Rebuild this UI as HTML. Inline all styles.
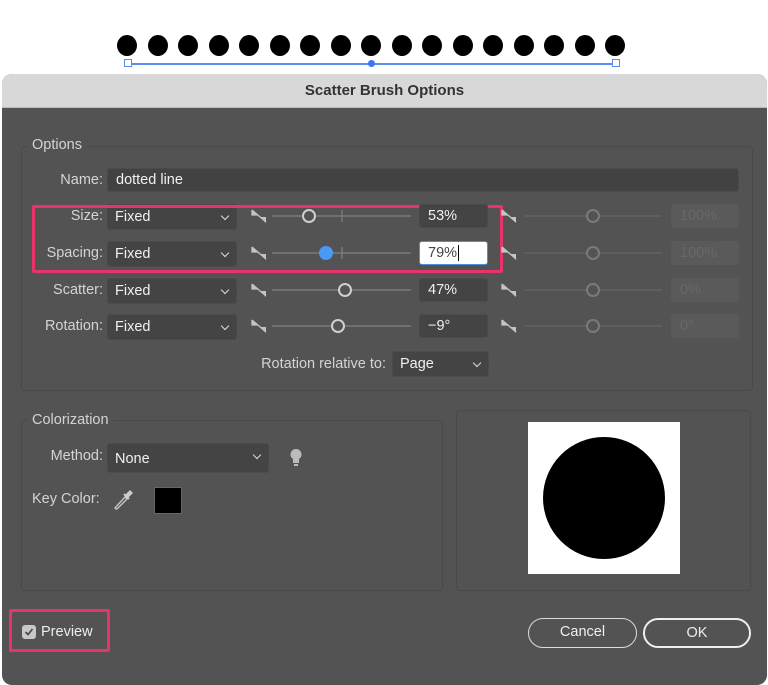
<!DOCTYPE html>
<html><head><meta charset="utf-8"><style>
*{margin:0;padding:0;box-sizing:border-box}
body{width:768px;height:685px;background:#fff;position:relative;overflow:hidden;font-family:"Liberation Sans",sans-serif}
.a{position:absolute}
.dot{position:absolute;top:35px;width:20px;height:21px;border-radius:50%;background:#000}
.dlg{position:absolute;left:2px;top:74px;width:765px;height:611px;background:#535353;border-radius:10px;overflow:hidden}
.hdr{position:absolute;left:0;top:0;width:100%;height:34px;background:#d8d8d8;border-bottom:1px solid #bbb;text-align:center;font-weight:bold;font-size:15px;color:#333;line-height:34px}
.grp{position:absolute;border:1px solid #4a4a4a;border-radius:4px}
.lbl{position:absolute;color:#d4d4d4;font-size:14.5px;text-align:right}
.sel{position:absolute;background:#444;border:1px solid #4b4b4b;border-radius:3px;color:#f0f0f0;font-size:14.5px;padding-left:7px;line-height:24px;height:26px}
.sel:after{content:"";position:absolute;right:8px;top:8px;width:5px;height:5px;border-right:1.5px solid #ddd;border-bottom:1.5px solid #ddd;transform:rotate(45deg)}
.box{position:absolute;background:#444;border:1px solid #4b4b4b;border-radius:3px;color:#f0f0f0;font-size:14.5px;padding-left:8px;line-height:22px;height:24px}
.ic{position:absolute}
</style></head><body>
<div class="dot" style="left:117px"></div><div class="dot" style="left:147.5px"></div><div class="dot" style="left:178px"></div><div class="dot" style="left:208.5px"></div><div class="dot" style="left:239px"></div><div class="dot" style="left:269.5px"></div><div class="dot" style="left:300px"></div><div class="dot" style="left:330.5px"></div><div class="dot" style="left:361px"></div><div class="dot" style="left:391.5px"></div><div class="dot" style="left:422px"></div><div class="dot" style="left:452.5px"></div><div class="dot" style="left:483px"></div><div class="dot" style="left:513.5px"></div><div class="dot" style="left:544px"></div><div class="dot" style="left:574.5px"></div><div class="dot" style="left:605px"></div>
<div class="a" style="left:128px;top:63px;width:488px;height:1.5px;background:#5a8df0"></div>
<div class="a" style="left:124px;top:59px;width:8px;height:8px;border:1.5px solid #5a8df0;background:#fff"></div>
<div class="a" style="left:612px;top:59px;width:8px;height:8px;border:1.5px solid #5a8df0;background:#fff"></div>
<div class="a" style="left:368px;top:60px;width:7px;height:7px;border-radius:50%;background:#3b78f0"></div>

<div class="dlg">
<div class="hdr">Scatter Brush Options</div>
</div>
<div class="grp" style="left:21px;top:146px;width:732px;height:245px"></div>
<div class="a" style="left:28px;top:137px;padding:0 4px;background:#535353;color:#d4d4d4;font-size:14.5px">Options</div>
<div class="lbl" style="left:28px;top:172px;width:75px">Name:</div>
<div class="box" style="left:107px;top:168px;width:632px;background:#424242">dotted line</div>

<div class="lbl" style="left:28px;top:208px;width:75px">Size:</div>
<div class="lbl" style="left:28px;top:245px;width:75px">Spacing:</div>
<div class="lbl" style="left:28px;top:282px;width:75px">Scatter:</div>
<div class="lbl" style="left:28px;top:318px;width:75px">Rotation:</div>
<div class="sel" style="left:107px;top:204px;width:130px">Fixed</div>
<div class="sel" style="left:107px;top:241px;width:130px">Fixed</div>
<div class="sel" style="left:107px;top:278px;width:130px">Fixed</div>
<div class="sel" style="left:107px;top:314px;width:130px">Fixed</div>

<div class="lbl" style="left:236px;top:356px;width:150px">Rotation relative to:</div>
<div class="sel" style="left:392px;top:351px;width:97px">Page</div>

<div class="grp" style="left:21px;top:420px;width:422px;height:171px"></div>
<div class="a" style="left:28px;top:412px;padding:0 4px;background:#535353;color:#d4d4d4;font-size:14.5px">Colorization</div>
<div class="lbl" style="left:28px;top:448px;width:75px">Method:</div>
<div class="sel" style="left:107px;top:443px;width:162px;height:30px;line-height:30px">None</div>
<svg class="ic" style="left:289px;top:448px" width="14" height="20"><circle cx="7" cy="6.5" r="5.5" fill="#bbb"/><rect x="4" y="11" width="6" height="4" fill="#bbb"/><rect x="5" y="16" width="4" height="2" fill="#bbb"/></svg>
<div class="lbl" style="left:32px;top:491px;width:80px;text-align:left">Key Color:</div>
<svg class="ic" style="left:112px;top:488px" width="24" height="24"><path d="M4 21 L3 20 L13 9 L15 11 L5 21 Z" fill="none" stroke="#ccc" stroke-width="1.3"/><path d="M13 7 L18 2 L21 5 L16 10 Z" fill="#ccc"/><path d="M12 6 L17 11" stroke="#ccc" stroke-width="2"/></svg>
<div class="a" style="left:154px;top:487px;width:28px;height:27px;background:#000;border:1px solid #666"></div>

<div class="grp" style="left:456px;top:410px;width:295px;height:181px"></div>
<div class="a" style="left:528px;top:422px;width:152px;height:152px;background:#fff"></div>
<div class="a" style="left:543px;top:437px;width:122px;height:122px;border-radius:50%;background:#000"></div>

<div class="a" style="left:22px;top:625px;width:14px;height:14px;background:#c8c8c8;border-radius:3px"></div>
<svg class="ic" style="left:22px;top:625px" width="14" height="14"><path d="M3.5 7 L6 9.5 L10.5 4" stroke="#444" stroke-width="1.6" fill="none"/></svg>
<div class="a" style="left:41px;top:624px;color:#eee;font-size:14.5px">Preview</div>

<div class="a" style="left:528px;top:618px;width:109px;height:30px;border:1.5px solid #ddd;border-radius:15px;color:#eee;font-size:14.5px;text-align:center;line-height:27px">Cancel</div>
<div class="a" style="left:643px;top:618px;width:108px;height:30px;border:2px solid #eee;border-radius:15px;color:#eee;font-size:14.5px;text-align:center;line-height:26px">OK</div>

<div class="a" style="left:32px;top:205px;width:471px;height:68px;border:3px solid #e83468;border-radius:2px"></div>
<div class="a" style="left:9px;top:609px;width:101px;height:43px;border:3px solid #e83468;border-radius:2px"></div>

<svg class="ic" style="left:0;top:0" width="768" height="685">
<defs>
<g id="tri"><path d="M0 -6 L6 -1 L0 -1 Z" fill="#c4c4c4"/><path d="M0 -6 L14 6 M0 -6 L0 -1 L6 -1" fill="none" stroke="#c4c4c4" stroke-width="1.3"/><path d="M8 1 L14 1 L14 7 Z" fill="#c4c4c4"/></g>
</defs>
<g stroke="#7a7a7a" stroke-width="1.5">
<line x1="272" y1="216" x2="411" y2="216"/><line x1="272" y1="253" x2="411" y2="253"/><line x1="272" y1="290" x2="411" y2="290"/><line x1="272" y1="326" x2="411" y2="326"/>
<line x1="342" y1="210" x2="342" y2="222"/><line x1="342" y1="247" x2="342" y2="259"/>
</g>
<g stroke="#626262" stroke-width="1.5">
<line x1="524" y1="216" x2="662" y2="216"/><line x1="524" y1="253" x2="662" y2="253"/><line x1="524" y1="290" x2="662" y2="290"/><line x1="524" y1="326" x2="662" y2="326"/>
</g>
<use href="#tri" x="252" y="216"/><use href="#tri" x="252" y="253"/><use href="#tri" x="252" y="290"/><use href="#tri" x="252" y="326"/>
<use href="#tri" x="502" y="216"/><use href="#tri" x="502" y="253"/><use href="#tri" x="502" y="290"/><use href="#tri" x="502" y="326"/>
<g fill="#535353" stroke="#cfcfcf" stroke-width="2">
<circle cx="309" cy="216" r="6"/><circle cx="345" cy="290" r="6"/><circle cx="338" cy="326" r="6"/>
</g>
<circle cx="326" cy="253" r="7" fill="#4a9af5"/>
<g fill="#535353" stroke="#7a7a7a" stroke-width="2">
<circle cx="593" cy="216" r="6"/><circle cx="593" cy="253" r="6"/><circle cx="593" cy="290" r="6"/><circle cx="593" cy="326" r="6"/>
</g>
</svg>
<div class="box" style="left:419px;top:204px;width:69px">53%</div>
<div class="box" style="left:419px;top:241px;width:69px;background:#fff;border:1.5px solid #4a90e2;color:#444">79%<span style="border-left:1.5px solid #000;margin-left:1px"></span></div>
<div class="box" style="left:419px;top:278px;width:69px">47%</div>
<div class="box" style="left:419px;top:314px;width:69px">−9°</div>
<div class="box" style="left:671px;top:204px;width:68px;background:#5a5a5a;border-color:#5a5a5a;color:#686868">100%</div>
<div class="box" style="left:671px;top:241px;width:68px;background:#5a5a5a;border-color:#5a5a5a;color:#686868">100%</div>
<div class="box" style="left:671px;top:278px;width:68px;background:#5a5a5a;border-color:#5a5a5a;color:#686868">0%</div>
<div class="box" style="left:671px;top:314px;width:68px;background:#5a5a5a;border-color:#5a5a5a;color:#686868">0°</div>
</body></html>
